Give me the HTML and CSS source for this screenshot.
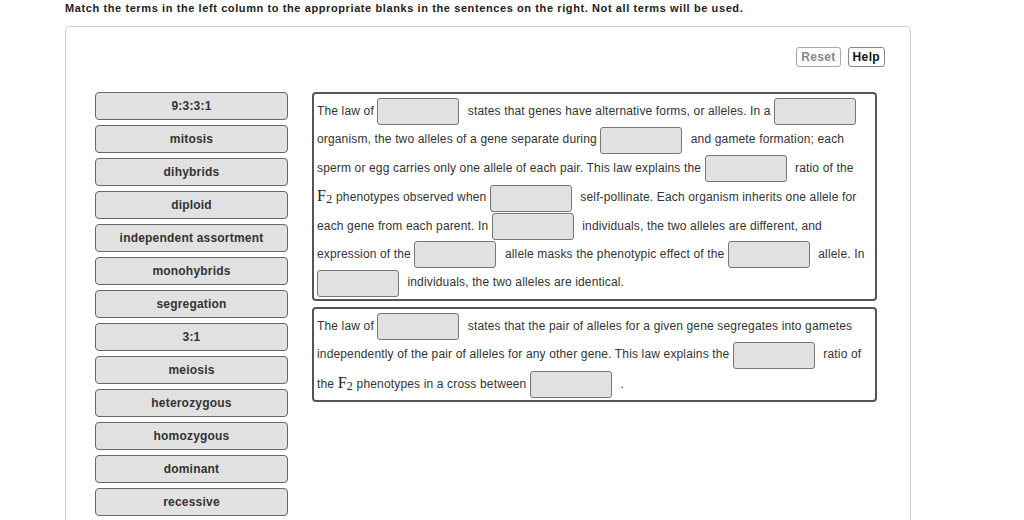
FILE: index.html
```html
<!DOCTYPE html>
<html lang="en">

<head>
    <meta charset="UTF-8">
    <title>Matching</title>
    <link rel="stylesheet" href="styles.css">
</head>

<body>
    <p class="prompt">Match the terms in the left column to the appropriate blanks in the sentences on the right. Not all terms will be used.</p>

    <div class="panel">
        <div class="toolbar">
            <span class="tool disabled">Reset</span>
            <span class="tool">Help</span>
        </div>

        <div class="board">
            <div class="terms">
                <div class="term">9:3:3:1</div>
                <div class="term">mitosis</div>
                <div class="term">dihybrids</div>
                <div class="term">diploid</div>
                <div class="term">independent assortment</div>
                <div class="term">monohybrids</div>
                <div class="term">segregation</div>
                <div class="term">3:1</div>
                <div class="term">meiosis</div>
                <div class="term">heterozygous</div>
                <div class="term">homozygous</div>
                <div class="term">dominant</div>
                <div class="term">recessive</div>
            </div>

            <div class="sentences">
                <div class="sentence">
                    The law of <span class="blank"></span> states that genes have alternative forms, or alleles. In a <span class="blank"></span><br>
                    organism, the two alleles of a gene separate during <span class="blank"></span> and gamete formation; each<br>
                    sperm or egg carries only one allele of each pair. This law explains the <span class="blank"></span> ratio of the<br>
                    <span class="math">F<sub>2</sub></span> phenotypes observed when <span class="blank"></span> self-pollinate. Each organism inherits one allele for<br>
                    each gene from each parent. In <span class="blank"></span> individuals, the two alleles are different, and<br>
                    expression of the <span class="blank"></span> allele masks the phenotypic effect of the <span class="blank"></span> allele. In<br>
                    <span class="blank"></span> individuals, the two alleles are identical.
                </div>
                <div class="sentence">
                    The law of <span class="blank"></span> states that the pair of alleles for a given gene segregates into gametes<br>
                    independently of the pair of alleles for any other gene. This law explains the <span class="blank"></span> ratio of<br>
                    the <span class="math">F<sub>2</sub></span> phenotypes in a cross between <span class="blank"></span> .
                </div>
            </div>
        </div>
    </div>
</body>

</html>
```

FILE: styles.css
```css
* {
    box-sizing: border-box;
}

body {
    margin: 0;
    font-family: "Liberation Sans", Arial, sans-serif;
    color: #333;
    overflow: hidden;
}

.prompt {
    margin: 1px 0 0 65px;
    font-size: 11px;
    line-height: 14px;
    font-weight: bold;
    letter-spacing: 0.6px;
    color: #222;
}

.panel {
    margin: 11px 0 0 65px;
    width: 846px;
    height: 560px;
    border: 1px solid #ccc;
    border-radius: 5px;
    padding: 20px 25px 0 29px;
}

.toolbar {
    display: flex;
    justify-content: flex-end;
    gap: 7px;
}

.tool {
    font-size: 12px;
    font-weight: bold;
    line-height: 18px;
    letter-spacing: 0.35px;
    padding: 0 4px;
    border: 1px solid #888;
    border-radius: 3px;
    color: #111;
}

.tool.disabled {
    color: #888;
    border-color: #aaa;
}

.board {
    display: flex;
    gap: 24px;
    margin-top: 25px;
}

.terms {
    display: flex;
    flex-direction: column;
    gap: 5px;
    width: 193px;
    flex-shrink: 0;
}

.term {
    height: 28px;
    line-height: 26px;
    text-align: center;
    font-size: 12px;
    font-weight: bold;
    letter-spacing: 0.2px;
    color: #333;
    background-color: #e1e1e1;
    border: 1px solid #666;
    border-radius: 4px;
}

.sentences {
    display: flex;
    flex-direction: column;
    gap: 6px;
    width: 565px;
}

.sentence {
    border: 2px solid #555;
    border-radius: 4px;
    padding: 3px 3px 2px 3px;
    font-size: 12px;
    line-height: 28.4px;
    letter-spacing: 0.15px;
    color: #333;
}

.blank {
    display: inline-block;
    width: 82px;
    height: 27px;
    vertical-align: middle;
    margin: 0 5px 0 0;
    background-color: #e1e1e1;
    border: 1px solid #777;
    border-radius: 3px;
}

.math {
    font-family: "Liberation Serif", "Times New Roman", serif;
    font-size: 16px;
    letter-spacing: 0.3px;
    color: #222;
}

.math sub {
    font-size: 12px;
    vertical-align: -2px;
    line-height: 0;
}
```
